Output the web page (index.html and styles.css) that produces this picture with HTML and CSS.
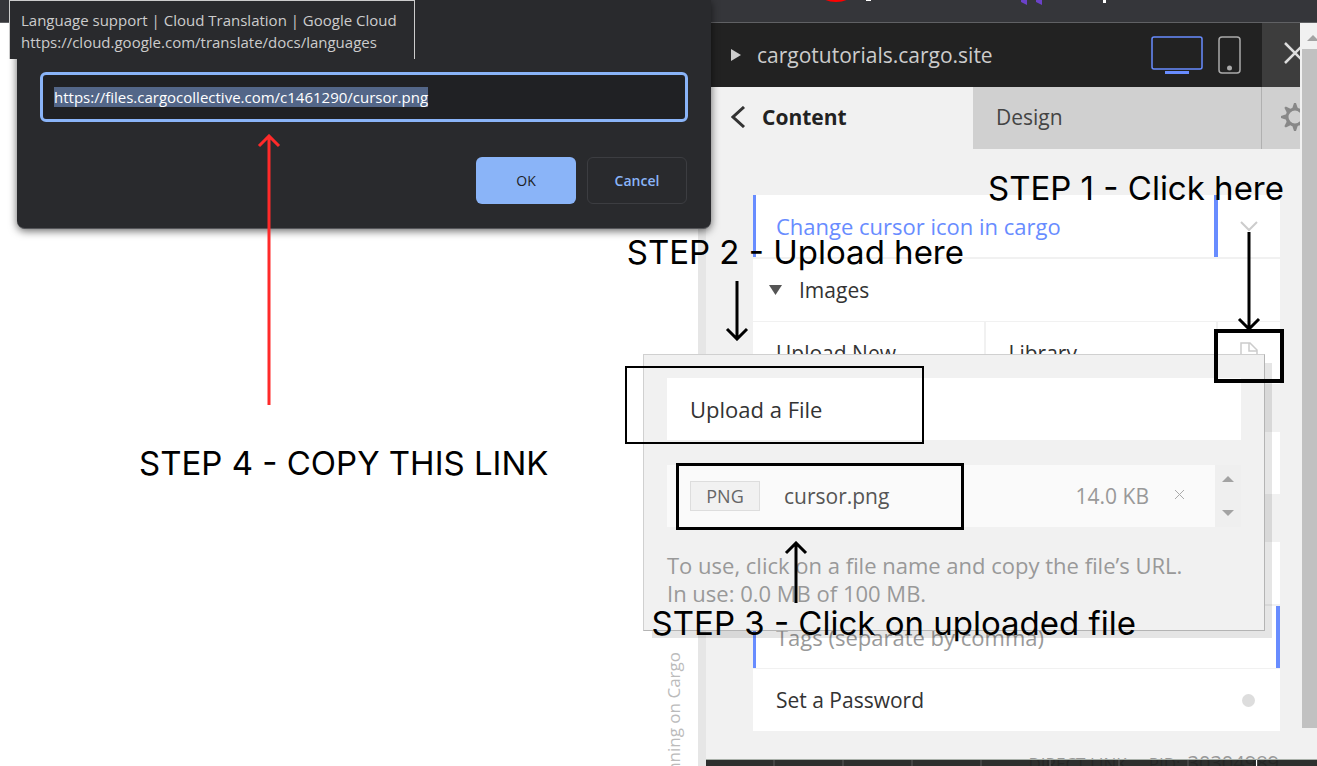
FILE: index.html
```html
<!DOCTYPE html>
<html lang="en">
<head>
  <meta charset="UTF-8">
  <meta name="viewport" content="width=device-width, initial-scale=1.0">
  <title>Change cursor icon in cargo</title>
  <link rel="stylesheet" href="styles.css">
</head>
<body>
  <div class="page">
    <header class="browser-bar">
      <svg class="bookmarks" width="300" height="6" viewBox="0 0 300 6">
        <ellipse cx="21" cy="-6" rx="16" ry="8" fill="#f00"/>
        <path d="M51 0h5v1h-5z" fill="#fff"/>
        <path d="M206 0h6v5l-6-3zM221 0h6v5l-6-3z" fill="#6b42c8"/>
        <path d="M288 0h3v3h-3z" fill="#fff"/>
      </svg>
    </header>

    <div class="workspace">
      <main class="canvas">
        <p class="credit">Running on Cargo</p>
      </main>

      <aside class="panel">
        <div class="site-bar">
          <svg width="10" height="12" viewBox="0 0 10 12"><path d="M0 0l10 6-10 6z" fill="#ccc"/></svg>
          <span class="site-name">cargotutorials.cargo.site</span>
          <button class="icon-btn desktop" aria-label="Desktop view">
            <svg width="52" height="38" viewBox="0 0 52 38">
              <rect x="1" y="1" width="50" height="32" rx="2" fill="none" stroke="#688cff" stroke-width="1.5"/>
              <path d="M14 35h24v3H14z" fill="#688cff"/>
            </svg>
          </button>
          <button class="icon-btn mobile" aria-label="Mobile view">
            <svg width="24" height="38" viewBox="0 0 24 38">
              <rect x="1" y="1" width="21" height="36" rx="3" fill="none" stroke="#aaa" stroke-width="1.5"/>
              <circle cx="11.500" cy="32" r="2.500" fill="#aaa"/>
            </svg>
          </button>
          <button class="icon-btn close" aria-label="Close">
            <svg width="22" height="22" viewBox="0 0 22 22"><path d="M1 1l20 20M21 1L1 21" stroke="#ddd" stroke-width="2.500"/></svg>
          </button>
        </div>

        <nav class="tabs">
          <button class="tab active">
            <svg width="15" height="22" viewBox="0 0 15 22"><path d="M13 1L2 11l11 10" fill="none" stroke="#333" stroke-width="3"/></svg>
            Content
          </button>
          <button class="tab">Design</button>
          <button class="tab gear" aria-label="Settings">
            <svg width="28" height="28" viewBox="-14 -14 28 28">
              <circle r="8" fill="none" stroke="#888" stroke-width="3"/>
              <g fill="#888">
                <path id="tooth" d="M-3-8l2-6h2l2 6z"/>
                <use href="#tooth" transform="rotate(45)"/>
                <use href="#tooth" transform="rotate(90)"/>
                <use href="#tooth" transform="rotate(135)"/>
                <use href="#tooth" transform="rotate(180)"/>
                <use href="#tooth" transform="rotate(225)"/>
                <use href="#tooth" transform="rotate(270)"/>
                <use href="#tooth" transform="rotate(315)"/>
              </g>
            </svg>
          </button>
        </nav>

        <div class="content">
          <div class="row title-row">
            <input class="marked" type="text" value="Change cursor icon in cargo" aria-label="Page title">
            <button class="side-btn" aria-label="More">
              <svg width="18" height="11" viewBox="0 0 18 11"><path d="M1 1l8 8 8-8" fill="none" stroke="#ccc" stroke-width="2"/></svg>
            </button>
          </div>
          <button class="row images">
            <svg width="13" height="10" viewBox="0 0 13 10"><path d="M0 0h13L6.500 10z" fill="#555"/></svg>
            Images
          </button>
          <div class="row split">
            <button>Upload New</button>
            <button>Library</button>
            <button class="side-btn" aria-label="Files">
              <svg width="18" height="22" viewBox="0 0 18 22"><path d="M1 1h9l7 7v13H1zM9 1v8h8" fill="none" stroke="#ccc" stroke-width="1.500"/></svg>
            </button>
          </div>
          <div class="row spaced"></div>
          <div class="row spaced"></div>
          <div class="row tags">
            <input class="marked" type="text" placeholder="Tags (separate by comma)" aria-label="Tags">
          </div>
          <label class="row password">Set a Password <input type="checkbox"></label>
        </div>

        <footer class="page-info">
          <span>DIRECT LINK</span>
          <span>PID:</span>
          <span class="pid">30304989</span>
        </footer>
      </aside>

      <div class="scrollbar">
        <svg width="12" height="6" viewBox="0 0 12 6"><path d="M0 6l6-6 6 6z" fill="#a3a3a3"/></svg>
        <div class="thumb"></div>
      </div>
    </div>

    <div class="taskbar"></div>

    <section class="files-popup">
      <button class="upload">Upload a File</button>
      <div class="files">
        <div class="file">
          <span class="badge">PNG</span>
          <a class="file-name" href="#">cursor.png</a>
          <span class="size">14.0 KB</span>
          <button class="icon-btn remove" aria-label="Remove">
            <svg width="11" height="11" viewBox="0 0 11 11"><path d="M1 1l9 9M10 1l-9 9" stroke="#aaa"/></svg>
          </button>
        </div>
        <div class="stepper">
          <svg width="12" height="6" viewBox="0 0 12 6"><path d="M0 6l6-6 6 6z" fill="#a3a3a3"/></svg>
          <svg width="12" height="6" viewBox="0 0 12 6"><path d="M0 0l6 6 6-6z" fill="#a3a3a3"/></svg>
        </div>
      </div>
      <p class="hint">To use, click on a file name and copy the file’s URL.<br>In use: 0.0 MB of 100 MB.</p>
    </section>

    <form class="dialog">
      <input id="fileUrl" type="text" value="https://files.cargocollective.com/c1461290/cursor.png" aria-label="File URL">
      <div class="actions">
        <button class="ok" type="button">OK</button>
        <button class="cancel" type="button">Cancel</button>
      </div>
    </form>
    <div class="link-tip">
      Language support | Cloud Translation | Google Cloud<br>
      https://cloud.google.com/translate/docs/languages
    </div>

    <!-- tutorial notes -->
    <p class="note step1">STEP 1 - Click here</p>
    <p class="note step2">STEP 2 - Upload here</p>
    <p class="note step3">STEP 3 - Click on uploaded file</p>
    <p class="note step4">STEP 4 - COPY THIS LINK</p>
    <div class="frame frame1"></div>
    <div class="frame frame2"></div>
    <div class="frame frame3"></div>
    <svg class="arrow arrow1" width="24" height="98" viewBox="0 0 24 98"><path d="M12 0v96M2 87l10 10 10-10"/></svg>
    <svg class="arrow arrow2" width="24" height="60" viewBox="0 0 24 60"><path d="M12 0v58M2 48l10 10 10-10"/></svg>
    <svg class="arrow arrow3" width="24" height="62" viewBox="0 0 24 62"><path d="M12 62V2M2 12L12 2l10 10"/></svg>
    <svg class="arrow arrow4" width="24" height="271" viewBox="0 0 24 271"><path d="M12 271V2M2 12L12 2l10 10"/></svg>
  </div>

  <script>
    const fileUrl = document.getElementById('fileUrl');
    fileUrl.focus();
    fileUrl.select();
  </script>
</body>
</html>
```

FILE: styles.css
```css
* {
  box-sizing: border-box;
}
body {
  margin: 0;
  background: #fff;
  font-family: "Open Sans", "Noto Sans", sans-serif;
  font-size: 21px;
  color: #333;
}
p {
  margin: 0;
}
svg {
  display: block;
  flex: none;
}
button, input {
  font: inherit;
  color: inherit;
  border: 0;
  border-radius: 0;
  margin: 0;
  padding: 0;
  background: none;
  text-align: left;
  outline: none;
}
button {
  cursor: pointer;
}
.page {
  position: relative;
  display: flex;
  flex-direction: column;
  height: 100vh;
  overflow: hidden;
}
.browser-bar {
  flex: none;
  height: 23px;
  background: #35363a;
  border-bottom: 1px solid #606164;
}
.bookmarks {
  margin-left: auto;
  margin-right: 202px;
}
.workspace {
  flex: 1;
  display: flex;
  min-height: 0;
}
.canvas {
  position: relative;
  flex: 1;
  border-right: 8px solid #e6e6e6;
  overflow: hidden;
}
.credit {
  position: absolute;
  top: 629px;
  right: 12px;
  writing-mode: vertical-rl;
  transform: rotate(180deg);
  font-size: 17px;
  line-height: 24px;
  color: #bbb;
  white-space: nowrap;
}

/* panel */
.panel {
  flex: none;
  width: 594px;
  background: #f1f1f1;
  overflow: hidden;
}
.site-bar {
  display: flex;
  align-items: center;
  height: 64px;
  padding-left: 25px;
  padding-bottom: 1px;
  background: #222;
  color: #ccc;
}
.site-name {
  flex: 1;
  padding-left: 16px;
}
.icon-btn {
  display: flex;
  align-items: center;
}
.mobile {
  margin: 0 20px 0 15px;
}
.close {
  align-self: flex-start;
  width: 38px;
  height: 64px;
  padding-left: 22px;
  padding-bottom: 4px;
  background: #3d3d3d;
  overflow: hidden;
}
.tabs {
  display: flex;
  height: 62px;
}
.tab {
  flex: 1;
  padding-left: 23px;
  padding-bottom: 2px;
  background: #d0d0d0;
  color: #444;
}
.tab.active {
  display: flex;
  align-items: center;
  gap: 16px;
  flex: none;
  width: 267px;
  padding-left: 25px;
  background: none;
  color: #222;
  font-weight: 700;
}
.tab.gear {
  flex: none;
  width: 39px;
  padding-left: 19px;
  border-left: 1px solid #b0b0b0;
  overflow: hidden;
}
.content {
  padding: 46px 20px 20px 47px;
}
.row {
  display: flex;
  align-items: center;
  width: 100%;
  height: 62px;
  background: #fff;
}
.title-row {
  margin-bottom: 2px;
  color: #688cff;
}
.marked {
  flex: 1;
  min-width: 0;
  height: 62px;
  padding-left: 20px;
  border-left: 3px solid #688cff;
  border-right: 4px solid #688cff;
  font-size: 22px;
}
.marked::placeholder {
  color: #999;
  opacity: 1;
}
.side-btn {
  display: flex;
  justify-content: center;
  align-items: center;
  width: 62px;
  height: 62px;
}
.images {
  gap: 17px;
  padding-left: 16px;
  margin-bottom: 1px;
}
.split {
  gap: 2px;
  background: #f1f1f1;
}
.split button {
  flex: 1;
  height: 62px;
  padding-left: 23px;
  background: #fff;
}
.split .side-btn {
  flex: none;
  padding: 0;
}
.spaced {
  margin-top: 48px;
}
.tags {
  margin-top: 2px;
  margin-bottom: 1px;
}
.password {
  justify-content: space-between;
  padding: 0 25px 0 23px;
}
.password input {
  appearance: none;
  width: 13px;
  height: 13px;
  border-radius: 50%;
  background: #ddd;
}
.page-info {
  display: flex;
  justify-content: flex-end;
  align-items: baseline;
  padding: 0 21px;
  font-size: 17px;
  line-height: 24px;
  color: #999;
  white-space: nowrap;
}
.page-info span {
  margin-right: 22px;
}
.page-info span:nth-child(2) {
  margin-right: 7px;
}
.page-info .pid {
  margin: 0;
  font-size: 20px;
}
.scrollbar {
  display: flex;
  flex-direction: column;
  flex: none;
  width: 17px;
  padding: 12px 0 38px 2px;
  background: #f1f1f1;
  overflow: hidden;
}
.scrollbar svg {
  margin: 0 0 8px 5px;
}
.thumb {
  flex: 1;
  background: #c1c1c1;
}
.taskbar {
  position: absolute;
  right: 0;
  bottom: 0;
  width: 611px;
  height: 7px;
  border-top: 1px solid #a9b0a9;
  background:
    linear-gradient(#fff, #fff) right 60px top / 1px 100% no-repeat,
    repeating-linear-gradient(90deg, transparent 0 67px, #444 67px 69px),
    rgba(24, 26, 24, 0.9);
}

/* file popup */
.files-popup {
  position: absolute;
  top: 354px;
  right: 52px;
  width: 622px;
  padding: 23px;
  background: #f1f1f1;
  border: 1px solid #d0d0d0;
  border-right-color: #b4b4b4;
  border-bottom-color: #b4b4b4;
  box-shadow: 8px 8px 0 -1px rgba(0, 0, 0, 0.1);
}
.upload {
  display: block;
  width: 100%;
  height: 62px;
  padding-left: 23px;
  margin-bottom: 25px;
  background: #fff;
  font-size: 22px;
}
.files {
  display: flex;
  height: 62px;
  margin-bottom: 24px;
}
.file {
  flex: 1;
  display: flex;
  align-items: center;
  padding: 0 30px 0 23px;
  background: #fafafa;
}
.badge {
  width: 70px;
  height: 30px;
  border: 1px solid #ddd;
  background: #f1f1f1;
  color: #666;
  font-size: 18px;
  line-height: 28px;
  text-align: center;
}
.file-name {
  flex: 1;
  padding-left: 24px;
  color: #555;
  text-decoration: none;
}
.size {
  color: #999;
}
.remove {
  margin-left: 25px;
  padding-bottom: 4px;
}
.stepper {
  display: flex;
  flex-direction: column;
  justify-content: space-between;
  align-items: center;
  width: 26px;
  padding: 11px 0;
  background: #efefef;
}
.hint {
  font-size: 22px;
  line-height: 28px;
  color: #999;
  white-space: nowrap;
}

/* prompt dialog */
.dialog {
  position: absolute;
  top: 0;
  left: 17px;
  width: 694px;
  padding: 72px 23px 24px;
  background: #292a2d;
  border-bottom: 1px solid #55565a;
  border-radius: 0 0 8px 8px;
  box-shadow: 0 2px 8px rgba(0, 0, 0, 0.6);
  font-size: 15px;
}
.dialog input {
  display: block;
  width: 100%;
  height: 50px;
  padding: 0 11px;
  border: 3px solid #8ab4f8;
  border-radius: 6px;
  background: #202124;
  color: #fff;
}
.dialog input::selection {
  background: #536688;
  color: #fff;
}
.actions {
  display: flex;
  justify-content: flex-end;
  gap: 11px;
  padding: 35px 1px 0 0;
}
.actions button {
  width: 100px;
  height: 47px;
  border-radius: 6px;
  font-size: 14px;
  text-align: center;
}
.actions .ok {
  background: #8ab4f8;
  color: #202124;
}
.actions .cancel {
  border: 1px solid #3c3d41;
  color: #8ab4f8;
  font-weight: 600;
}
.link-tip {
  position: absolute;
  top: 0;
  left: 9px;
  width: 406px;
  height: 59px;
  padding: 8px 11px;
  border: 1px solid #ccc;
  border-bottom: 0;
  background: #292a2d;
  color: #ccc;
  font-size: 15px;
  line-height: 22px;
  white-space: nowrap;
}

/* notes */
.note {
  position: absolute;
  font-family: Inter, "Liberation Sans", sans-serif;
  font-size: 33px;
  line-height: 40px;
  color: #000;
  white-space: nowrap;
}
.step1 {
  top: 168px;
  right: 33px;
}
.step2 {
  top: 232px;
  right: 353px;
}
.step3 {
  top: 603px;
  right: 181px;
}
.step4 {
  top: 443px;
  left: 139px;
}
.frame {
  position: absolute;
  border: 3px solid #000;
}
.frame1 {
  top: 329px;
  right: 33px;
  width: 70px;
  height: 54px;
  border-width: 4px;
}
.frame2 {
  top: 366px;
  right: 393px;
  width: 299px;
  height: 78px;
  border-width: 2px;
}
.frame3 {
  top: 463px;
  right: 353px;
  width: 288px;
  height: 67px;
}
.arrow {
  position: absolute;
  fill: none;
  stroke: #000;
  stroke-width: 3;
}
.arrow1 {
  top: 232px;
  right: 56px;
}
.arrow2 {
  top: 281px;
  right: 568px;
}
.arrow3 {
  top: 541px;
  right: 509px;
}
.arrow4 {
  top: 134px;
  left: 257px;
  stroke: #ff2a2a;
}
```
